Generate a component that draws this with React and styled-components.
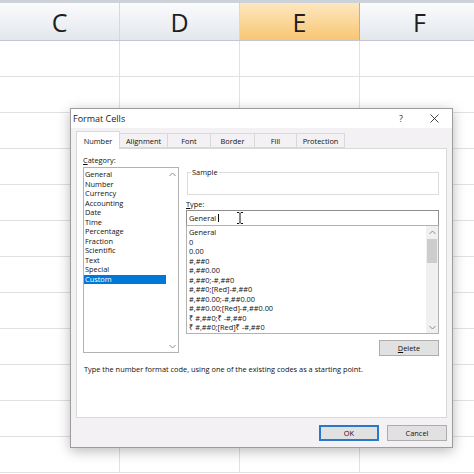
import styled, { createGlobalStyle } from "styled-components";

const GlobalStyle = createGlobalStyle`
  html, body {
    margin: 0;
    padding: 0;
    background: #fff;
  }
  body {
    font-family: "Open Sans", "Noto Sans", "Liberation Sans", sans-serif;
    overflow: hidden;
  }
`;

const Page = styled.div`
  position: relative;
  width: 474px;
  height: 474px;
  overflow: hidden;
  background: #fff;
`;

// spreadsheet behind the dialog
const HeaderRow = styled.div`
  display: grid;
  grid-template-columns: repeat(4, 120px);
  height: 37px;
  border-top: 3px solid #cdd2d8;
  border-bottom: 1px solid #c3c8cf;
`;

const ColHead = styled.div`
  display: flex;
  align-items: center;
  justify-content: center;
  font-size: 25px;
  color: #1e1e1e;
  border-right: 1px solid ${(p) => (p.$active ? "#e3ac52" : "#d5d9df")};
  background: ${(p) =>
    p.$active
      ? "linear-gradient(#fde7c0, #f8c672)"
      : "linear-gradient(#fafbfc, #e3e7ed)"};
`;

const Sheet = styled.div`
  display: grid;
  grid-template-columns: repeat(4, 120px);
  grid-auto-rows: 36px;
`;

const Cell = styled.div`
  border-right: 1px solid #e1e1e1;
  border-bottom: 1px solid #e1e1e1;
`;

// dialog
const Dialog = styled.div`
  position: absolute;
  left: 70px;
  top: 108px;
  width: 383px;
  height: 340px;
  box-sizing: border-box;
  border: 1px solid #9c9c9c;
  background: #f3f1f3;
  box-shadow: 0 3px 12px rgba(0, 0, 0, 0.28);
  display: flex;
  flex-direction: column;
  font-size: 7.4px;
  color: #111;
`;

const TitleBar = styled.div`
  height: 19px;
  background: #fff;
  display: flex;
  align-items: center;
  padding-left: 2px;
  font-size: 9px;
  color: #222;
`;

const Title = styled.div`
  flex: 1;
`;

const TitleBtn = styled.div`
  width: ${(p) => p.$w}px;
  height: 19px;
  display: flex;
  align-items: center;
  justify-content: center;
  font-size: 9px;
  color: #333;
`;

const Body = styled.div`
  flex: 1;
  display: flex;
  flex-direction: column;
  padding: 3px 5px 0 5px;
`;

const Tabs = styled.div`
  display: flex;
  align-items: flex-end;
  height: 17px;
`;

const Tab = styled.div`
  box-sizing: border-box;
  width: ${(p) => p.$w}px;
  height: ${(p) => (p.$active ? 18 : 15)}px;
  margin-bottom: ${(p) => (p.$active ? -1 : 0)}px;
  display: flex;
  align-items: center;
  justify-content: center;
  border: 1px solid #d9d9d9;
  border-bottom: ${(p) => (p.$active ? "none" : "1px solid #d9d9d9")};
  margin-right: -1px;
  background: ${(p) => (p.$active ? "#fff" : "#f3f1f3")};
  position: relative;
  z-index: ${(p) => (p.$active ? 2 : 1)};
`;

const Panel = styled.div`
  box-sizing: border-box;
  width: 371px;
  height: 270px;
  background: #fff;
  border: 1px solid #d9d9d9;
  padding: 6px 5px 0 6px;
`;

const Columns = styled.div`
  display: grid;
  grid-template-columns: 96px 253px;
  column-gap: 7px;
`;

const Stack = styled.div`
  display: flex;
  flex-direction: column;
`;

const Label = styled.div`
  height: 10px;
  line-height: 10px;
  u {
    text-decoration: underline;
  }
`;

const ListBox = styled.div`
  box-sizing: border-box;
  height: ${(p) => p.$h}px;
  margin-top: ${(p) => p.$mt || 0}px;
  border: 1px solid #b2b2b2;
  display: flex;
  background: #fff;
`;

const Items = styled.div`
  flex: 1;
  padding-top: 2px;
  overflow: hidden;
`;

const Item = styled.div`
  height: 9.5px;
  line-height: 9.5px;
  padding-left: ${(p) => p.$pl || 1}px;
  white-space: nowrap;
  background: ${(p) => (p.$selected ? "#0078d7" : "transparent")};
  color: ${(p) => (p.$selected ? "#fff" : "#111")};
`;

const ScrollBar = styled.div`
  width: 12px;
  display: flex;
  flex-direction: column;
  align-items: center;
  background: ${(p) => (p.$track ? "#f0f0f0" : "#fff")};
`;

const Arrow = styled.div`
  height: 12px;
  display: flex;
  align-items: center;
  justify-content: center;
`;

const Track = styled.div`
  flex: 1;
  width: 100%;
  display: flex;
  justify-content: center;
`;

const Thumb = styled.div`
  width: 10px;
  height: 24px;
  margin-top: 1px;
  background: #cdcdcd;
`;

const Fieldset = styled.fieldset`
  margin: 13px 0 0 1px;
  padding: 0;
  height: 27px;
  border: 1px solid #dcdcdc;
  box-sizing: border-box;
  min-width: 0;

  legend {
    padding: 0 1px;
    margin-left: 3px;
    font-size: 7.4px;
    line-height: 9px;
  }
`;

const TypeLabel = styled(Label)`
  margin-top: 4px;
  margin-bottom: 1px;
`;

const InputBox = styled.div`
  box-sizing: border-box;
  height: 15px;
  border: 1px solid #8f8f8f;
  border-bottom: none;
  display: flex;
  align-items: center;
  padding-left: 2px;
  position: relative;
`;

const Caret = styled.span`
  display: inline-block;
  width: 1px;
  height: 8px;
  margin-left: 2px;
  background: #111;
  vertical-align: middle;
`;

const IBeam = styled.svg`
  position: absolute;
  left: 49px;
  top: 1px;
`;

const Button = styled.div`
  box-sizing: border-box;
  width: 60px;
  height: 16px;
  display: flex;
  align-items: center;
  justify-content: center;
  background: #e1e1e1;
  border: ${(p) => (p.$default ? "2px solid #2a78c8" : "1px solid #adadad")};
  u {
    text-decoration: underline;
  }
`;

const DeleteRow = styled.div`
  display: flex;
  justify-content: flex-end;
  margin-top: 6px;
`;

const Hint = styled.div`
  margin-top: 8px;
  line-height: 10px;
  padding-left: 1px;
`;

const Footer = styled.div`
  display: flex;
  justify-content: flex-end;
  gap: 8px;
  padding: 7px 0 0 0;
`;

const Chevron = ({ down }) => (
  <svg width="7" height="5" viewBox="0 0 7 5">
    <polyline
      points={down ? "0.5,1 3.5,4 6.5,1" : "0.5,4 3.5,1 6.5,4"}
      fill="none"
      stroke={"#8a8a8a"}
      strokeWidth="1"
    />
  </svg>
);

const columns = ["C", "D", "E", "F"];
const tabs = [
  ["Number", 44],
  ["Alignment", 49],
  ["Font", 44],
  ["Border", 45],
  ["Fill", 43],
  ["Protection", 49],
];
const categories = [
  "General",
  "Number",
  "Currency",
  "Accounting",
  "Date",
  "Time",
  "Percentage",
  "Fraction",
  "Scientific",
  "Text",
  "Special",
  "Custom",
];
const codes = [
  "General",
  "0",
  "0.00",
  "#,##0",
  "#,##0.00",
  "#,##0;-#,##0",
  "#,##0;[Red]-#,##0",
  "#,##0.00;-#,##0.00",
  "#,##0.00;[Red]-#,##0.00",
  "₹ #,##0;₹ -#,##0",
  "₹ #,##0;[Red]₹ -#,##0",
];

export default function App() {
  return (
    <Page>
      <GlobalStyle />
      <HeaderRow>
        {columns.map((c) => (
          <ColHead key={c} $active={c === "E"}>
            {c}
          </ColHead>
        ))}
      </HeaderRow>
      <Sheet>
        {Array.from({ length: 48 }).map((_, i) => (
          <Cell key={i} />
        ))}
      </Sheet>

      <Dialog>
        <TitleBar>
          <Title>Format Cells</Title>
          <TitleBtn $w={30}>?</TitleBtn>
          <TitleBtn $w={36}>
            <svg width="9" height="9" viewBox="0 0 9 9">
              <path d="M0.5 0.5L8.5 8.5M8.5 0.5L0.5 8.5" stroke="#333" strokeWidth="0.9" />
            </svg>
          </TitleBtn>
        </TitleBar>
        <Body>
          <Tabs>
            {tabs.map(([t, w]) => (
              <Tab key={t} $w={w} $active={t === "Number"}>
                {t}
              </Tab>
            ))}
          </Tabs>
          <Panel>
            <Columns>
              <Stack>
                <Label>
                  <u>C</u>ategory:
                </Label>
                <ListBox $h={186} $mt={2}>
                  <Items>
                    {categories.map((c) => (
                      <Item key={c} $selected={c === "Custom"}>
                        {c}
                      </Item>
                    ))}
                  </Items>
                  <ScrollBar>
                    <Arrow>
                      <Chevron />
                    </Arrow>
                    <Track />
                    <Arrow>
                      <Chevron down />
                    </Arrow>
                  </ScrollBar>
                </ListBox>
              </Stack>

              <Stack>
                <Fieldset>
                  <legend>Sample</legend>
                </Fieldset>
                <TypeLabel>
                  <u>T</u>ype:
                </TypeLabel>
                <InputBox>
                  General
                  <Caret />
                  <IBeam width="8" height="12" viewBox="0 0 8 12">
                    <path
                      d="M1 0.5H3L4 1.5L5 0.5H7M4 1.5V10.5M1 11.5H3L4 10.5L5 11.5H7"
                      fill="none"
                      stroke="#111"
                      strokeWidth="1"
                    />
                  </IBeam>
                </InputBox>
                <ListBox $h={109}>
                  <Items>
                    {codes.map((c, i) => (
                      <Item key={i} $pl={2}>
                        {c}
                      </Item>
                    ))}
                  </Items>
                  <ScrollBar $track>
                    <Arrow>
                      <Chevron />
                    </Arrow>
                    <Track>
                      <Thumb />
                    </Track>
                    <Arrow>
                      <Chevron down />
                    </Arrow>
                  </ScrollBar>
                </ListBox>
                <DeleteRow>
                  <Button>
                    <u>D</u>elete
                  </Button>
                </DeleteRow>
              </Stack>
            </Columns>
            <Hint>
              Type the number format code, using one of the existing codes as a starting point.
            </Hint>
          </Panel>
          <Footer>
            <Button $default>OK</Button>
            <Button>Cancel</Button>
          </Footer>
        </Body>
      </Dialog>
    </Page>
  );
}
